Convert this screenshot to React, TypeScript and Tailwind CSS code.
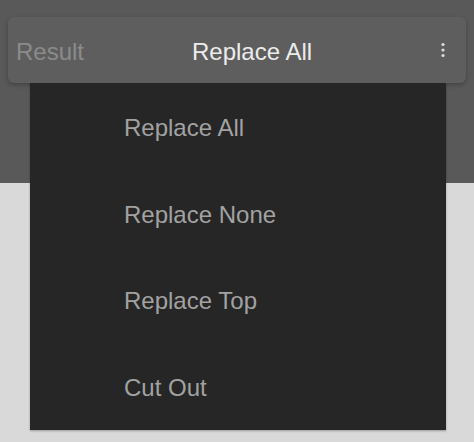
import { useState } from 'react'

const options = ['Replace All', 'Replace None', 'Replace Top', 'Cut Out']

function MoreIcon() {
  return (
    <svg width="6" height="18" viewBox="0 0 6 18" className="text-[#dcdcdc]">
      <circle cx="3" cy="3.5" r="1.6" fill="currentColor" />
      <circle cx="3" cy="9" r="1.6" fill="currentColor" />
      <circle cx="3" cy="14.5" r="1.6" fill="currentColor" />
    </svg>
  )
}

export default function App() {
  const [mode, setMode] = useState('Replace All')

  return (
    <div className="relative h-[442px] w-[474px] overflow-hidden bg-[#d9d9d9] font-['Liberation_Sans',Arial,sans-serif]">
      <div className="h-[183px] bg-[#595959] px-2 pt-[17px]">
        <div className="relative flex h-[66px] items-center rounded-md bg-[#5e5e5e] px-2 shadow-[0_2px_4px_rgba(0,0,0,0.25)]">
          <span className="pt-[3px] text-[24px] text-[#8b8b8b]">Result</span>
          <span className="absolute left-[184px] pt-[3px] text-[24px] text-[#ececec]">
            {mode}
          </span>
          <button className="ml-auto mr-[12px] flex items-center">
            <MoreIcon />
          </button>
        </div>
      </div>

      <div className="absolute left-[30px] top-[83px] flex h-[347px] w-[416px] flex-col bg-[#262626] shadow-[0_1px_2px_rgba(0,0,0,0.3)]">
        {options.map((option) => (
          <button
            key={option}
            onClick={() => setMode(option)}
            className="flex flex-1 items-center pl-[94px] pt-[3px] text-left text-[24px] text-[#a2a2a2]"
          >
            {option}
          </button>
        ))}
      </div>
    </div>
  )
}
